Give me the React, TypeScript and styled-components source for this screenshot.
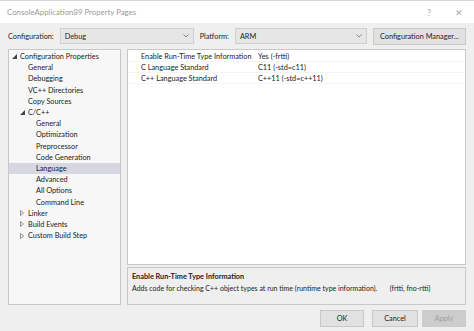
import React from 'react';
import styled, { createGlobalStyle } from 'styled-components';

const Global = createGlobalStyle`
  body {
    margin: 0;
    background: #ffffff;
    font-family: Lato, "Open Sans", sans-serif;
  }
`;

const Window = styled.div`
  width: 474px;
  height: 331px;
  display: flex;
  flex-flow: column;
  background: #efefef;
  box-sizing: border-box;
  border-top: 1px solid #d8d8d8;
  overflow: hidden;
  font-size: 7.3px;
  color: #222;
  white-space: nowrap;
`;

const TitleBar = styled.div`
  height: 22px;
  display: flex;
  align-items: center;
  padding: 0 0 0 7px;
  background: #ffffff;
  color: #9a9a9a;
  font-size: 7.8px;
`;

const TitleText = styled.div`
  flex: 1;
`;

const TitleButton = styled.div`
  width: 30px;
  text-align: center;
  color: #a8a8a8;
  font-size: 9px;
`;

const Toolbar = styled.div`
  display: flex;
  align-items: center;
  padding: 5px 8px 0 8px;
  height: 16px;
`;

const Label = styled.span`
  margin-right: 6px;
`;

const Select = styled.div<{ $width: number }>`
  width: ${(p) => p.$width}px;
  height: 16px;
  box-sizing: border-box;
  border: 1px solid #cfcfcf;
  background: #e6e6e6;
  display: flex;
  align-items: center;
  padding: 0 4px;
  margin-right: 6px;
`;

const SelectValue = styled.span`
  flex: 1;
`;

const Chevron = styled.svg`
  width: 6px;
  height: 4px;
`;

const Button = styled.div<{ $disabled?: boolean; $width?: number }>`
  height: 17px;
  width: ${(p) => (p.$width ? `${p.$width}px` : 'auto')};
  box-sizing: border-box;
  border: 1px solid ${(p) => (p.$disabled ? '#cccccc' : '#c8c8c8')};
  background: ${(p) => (p.$disabled ? '#cccccc' : '#e1e1e1')};
  color: ${(p) => (p.$disabled ? '#a0a0a0' : '#222')};
  display: flex;
  align-items: center;
  justify-content: center;
`;

const Main = styled.div`
  display: flex;
  gap: 6px;
  padding: 5px 8px 0 8px;
  height: 256px;
`;

const Tree = styled.div`
  width: 113px;
  box-sizing: border-box;
  border: 1px solid #c8c8c8;
  background: #f7f7f7;
  padding-top: 1px;
`;

const TreeItem = styled.div<{ $level: number; $selected?: boolean }>`
  height: 11.2px;
  display: flex;
  align-items: center;
  padding-left: ${(p) => 3 + p.$level * 8}px;
  background: ${(p) => (p.$selected ? '#d7d7e1' : 'transparent')};
`;

const Arrow = styled.span`
  width: 7px;
  display: inline-flex;
  align-items: center;
`;

const TreeLabel = styled.span<{ $indent: number }>`
  margin-left: ${(p) => p.$indent}px;
`;

const RightColumn = styled.div`
  flex: 1;
  display: flex;
  flex-flow: column;
  gap: 2px;
`;

const Grid = styled.div`
  flex: 1;
  border: 1px solid #c8c8c8;
  background: #ffffff;
  padding-top: 1px;
`;

const GridRow = styled.div`
  display: flex;
  align-items: center;
  height: 11px;
  padding-left: 13px;
  border-bottom: 1px solid #f4f4f4;
  box-sizing: border-box;
`;

const GridName = styled.div`
  width: 117px;
`;

const Description = styled.div`
  height: 38px;
  box-sizing: border-box;
  border: 1px solid #c8c8c8;
  background: #efefef;
  padding: 4px 4px;
`;

const DescTitle = styled.div`
  font-weight: 700;
  margin-bottom: 3px;
`;

const DescText = styled.div`
  white-space: pre;
  font-size: 7px;
`;

const Footer = styled.div`
  display: flex;
  justify-content: flex-end;
  padding: 5px 8px 0 0;
`;

const FooterGap = styled.div<{ $w: number }>`
  width: ${(p) => p.$w}px;
`;

const tree: { label: string; level: number; arrow?: 'open' | 'closed'; selected?: boolean }[] = [
  { label: 'Configuration Properties', level: 0, arrow: 'open' },
  { label: 'General', level: 1 },
  { label: 'Debugging', level: 1 },
  { label: 'VC++ Directories', level: 1 },
  { label: 'Copy Sources', level: 1 },
  { label: 'C/C++', level: 1, arrow: 'open' },
  { label: 'General', level: 2 },
  { label: 'Optimization', level: 2 },
  { label: 'Preprocessor', level: 2 },
  { label: 'Code Generation', level: 2 },
  { label: 'Language', level: 2, selected: true },
  { label: 'Advanced', level: 2 },
  { label: 'All Options', level: 2 },
  { label: 'Command Line', level: 2 },
  { label: 'Linker', level: 1, arrow: 'closed' },
  { label: 'Build Events', level: 1, arrow: 'closed' },
  { label: 'Custom Build Step', level: 1, arrow: 'closed' },
];

const props = [
  ['Enable Run-Time Type Information', 'Yes (-frtti)'],
  ['C Language Standard', 'C11 (-std=c11)'],
  ['C++ Language Standard', 'C++11 (-std=c++11)'],
];

function TreeArrow({ kind }: { kind?: 'open' | 'closed' }) {
  if (!kind) return null;
  return (
    <Arrow>
      {kind === 'open' ? (
        <svg width="5" height="5" viewBox="0 0 5 5">
          <path d="M5 0 L5 5 L0 5 Z" fill="#444" />
        </svg>
      ) : (
        <svg width="4" height="6" viewBox="0 0 4 6">
          <path d="M0.5 0.5 L3.5 3 L0.5 5.5 Z" fill="none" stroke="#777" strokeWidth="0.8" />
        </svg>
      )}
    </Arrow>
  );
}

function Dropdown({ width, value }: { width: number; value: string }) {
  return (
    <Select $width={width}>
      <SelectValue>{value}</SelectValue>
      <Chevron viewBox="0 0 6 4">
        <path d="M0.5 0.5 L3 3 L5.5 0.5" fill="none" stroke="#777" strokeWidth="0.9" />
      </Chevron>
    </Select>
  );
}

export default function App(): JSX.Element {
  return (
    <Window>
      <Global />
      <TitleBar>
        <TitleText>ConsoleApplication89 Property Pages</TitleText>
        <TitleButton>?</TitleButton>
        <TitleButton>✕</TitleButton>
      </TitleBar>
      <Toolbar>
        <Label>Configuration:</Label>
        <Dropdown width={134} value="Debug" />
        <Label>Platform:</Label>
        <Dropdown width={132} value="ARM" />
        <Button $width={93}>Configuration Manager...</Button>
      </Toolbar>
      <Main>
        <Tree>
          {tree.map((t, i) => (
            <TreeItem key={i} $level={t.level} $selected={t.selected}>
              <TreeArrow kind={t.arrow} />
              <TreeLabel $indent={t.arrow ? 1 : 8}>{t.label}</TreeLabel>
            </TreeItem>
          ))}
        </Tree>
        <RightColumn>
          <Grid>
            {props.map(([name, value]) => (
              <GridRow key={name}>
                <GridName>{name}</GridName>
                <div>{value}</div>
              </GridRow>
            ))}
          </Grid>
          <Description>
            <DescTitle>Enable Run-Time Type Information</DescTitle>
            <DescText>{'Adds code for checking C++ object types at run time (runtime type information).       (frtti, fno-rtti)'}</DescText>
          </Description>
        </RightColumn>
      </Main>
      <Footer>
        <Button $width={44}>OK</Button>
        <FooterGap $w={8} />
        <Button $width={46}>Cancel</Button>
        <FooterGap $w={4} />
        <Button $width={44} $disabled>Apply</Button>
      </Footer>
    </Window>
  );
}
